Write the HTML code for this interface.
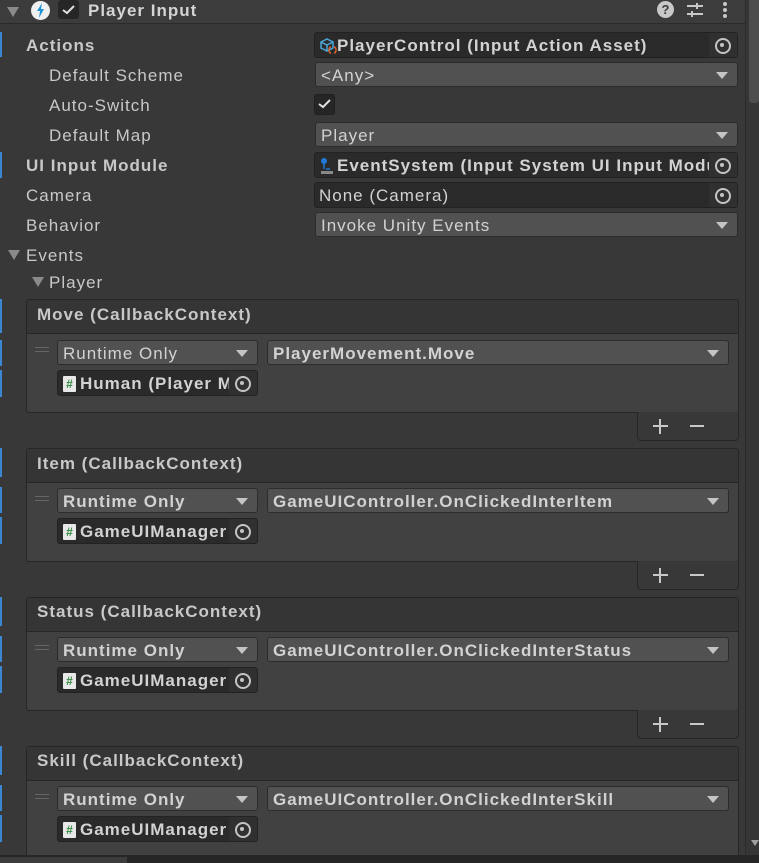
<!DOCTYPE html>
<html><head><meta charset="utf-8"><style>
*{box-sizing:border-box;margin:0;padding:0}
body{width:759px;height:863px;background:#383838;position:relative;overflow:hidden;font-family:"Liberation Sans",sans-serif;font-size:17px;letter-spacing:1px;color:#c8c8c8}
.a{position:absolute}
.t{position:absolute;white-space:nowrap;line-height:20px;top:0}
.b{font-weight:bold}
.dd{position:absolute;background:#515151;border:1px solid #2c2c2c;border-radius:3px;height:25px;overflow:hidden}
.dd span{position:absolute;left:5px;top:3px;line-height:20px;white-space:nowrap;color:#d2d2d2}
.arr{position:absolute;right:9px;top:9px;width:0;height:0;border-left:6px solid transparent;border-right:6px solid transparent;border-top:7px solid #c4c4c4}
.of{position:absolute;background:#2a2a2a;border:1px solid #222;border-radius:3px;height:26px;overflow:hidden}
.of span{position:absolute;top:3px;line-height:20px;white-space:nowrap;color:#d2d2d2}
.tg{position:absolute;right:0;top:0;width:28px;height:100%;background:#303030}
.tg:after{content:"";position:absolute;left:6px;top:5px;width:12px;height:12px;border:2px solid #c4c4c4;border-radius:50%}
.tg:before{content:"";position:absolute;left:11px;top:10px;width:4px;height:4px;background:#c4c4c4;border-radius:50%}
.blue{position:absolute;left:0;width:2px;background:#3a86d0}
.hash{position:absolute;left:5px;top:5px;width:13px;height:16px;background:#e8e8e8;border-radius:1px;color:#2e8b3e;font-size:12px;font-weight:bold;line-height:16px;text-align:center;letter-spacing:0}
.tri{position:absolute;width:0;height:0;border-left:6px solid transparent;border-right:6px solid transparent;border-top:10px solid #8a8a8a}
.pl{position:absolute;width:15px;height:2px;background:#c8c8c8}
.pl:after{content:"";position:absolute;left:6px;top:-6px;width:2px;height:15px;background:#c8c8c8}
</style></head><body>
<div class="a" style="left:0;top:0;width:745px;height:24px;background:#3c3c3c;border-bottom:1px solid #2a2a2a"></div>
<div class="tri" style="left:7px;top:7px"></div>
<div class="a" style="left:31px;top:1px;width:19px;height:19px;border-radius:50%;background:#f0f0f0"></div>
<svg class="a" style="left:34px;top:3px" width="13" height="15" viewBox="0 0 13 15"><path d="M8 0 L3 8 H6 L5 15 L10 6 H7 Z" fill="#1f93d8"/></svg>
<div class="a" style="left:58px;top:0;width:21px;height:19px;background:#262626;border-radius:3px"></div>
<svg class="a" style="left:61px;top:3px" width="15" height="13"><path d="M2 7 L6 10 L13 3" stroke="#e0e0e0" stroke-width="2" fill="none"/></svg>
<div class="t b" style="left:88px;top:1px;color:#d4d4d4">Player Input</div>
<div class="a" style="left:657px;top:1px;width:17px;height:17px;border-radius:50%;background:#c8c8c8;color:#3c3c3c;font-size:13px;font-weight:bold;text-align:center;line-height:17px;letter-spacing:0">?</div>
<svg class="a" style="left:686px;top:2px" width="18" height="16"><path d="M1 4H17M1 12H17" stroke="#c8c8c8" stroke-width="2"/><path d="M11 1V7M6 9V15" stroke="#c8c8c8" stroke-width="2"/></svg>
<div class="a" style="left:723px;top:2px;width:4px;height:4px;background:#c8c8c8;border-radius:50%;box-shadow:0 6px 0 #c8c8c8,0 12px 0 #c8c8c8"></div>
<div class="a" style="left:745px;top:0;width:14px;height:855px;background:#363636;border-left:1px solid #2c2c2c"></div>
<div class="a" style="left:749px;top:0;width:10px;height:103px;background:#4d4d4d;border-radius:0 0 3px 3px"></div>
<div class="a" style="left:751px;top:840px;border-left:4px solid transparent;border-right:4px solid transparent;border-top:6px solid #a0a0a0"></div>

<div class="blue" style="top:32px;height:25px"></div>
<div class="t b" style="left:26px;top:36px">Actions</div>
<div class="of" style="left:314px;top:32px;width:424px"><span style="left:22px;font-weight:bold">PlayerControl (Input Action Asset)</span><div class="tg"></div>
<svg class="a" style="left:4px;top:4px" width="18" height="18"><path d="M2 5 L8 2 L14 5 L14 11 L8 14 L2 11 Z M2 5 L8 8 L14 5 M8 8 V14" stroke="#4aa6d8" stroke-width="1.5" fill="none"/><path d="M12 10 Q10 10 10 13 Q10 16 12 16 M15 10 Q17 10 17 13 Q17 16 15 16" stroke="#e0602a" stroke-width="1.4" fill="none"/></svg></div>
<div class="t" style="left:49px;top:66px">Default Scheme</div>
<div class="dd" style="left:315px;top:62px;width:423px"><span>&lt;Any&gt;</span><div class="arr"></div></div>
<div class="t" style="left:49px;top:96px">Auto-Switch</div>
<div class="a" style="left:314px;top:94px;width:21px;height:21px;background:#262626;border-radius:3px;border:1px solid #202020"></div>
<svg class="a" style="left:317px;top:97px" width="15" height="13"><path d="M2 7 L6 10 L13 3" stroke="#e0e0e0" stroke-width="2" fill="none"/></svg>
<div class="t" style="left:49px;top:126px">Default Map</div>
<div class="dd" style="left:315px;top:122px;width:423px"><span>Player</span><div class="arr"></div></div>
<div class="blue" style="top:152px;height:26px"></div>
<div class="t b" style="left:26px;top:156px">UI Input Module</div>
<div class="of" style="left:314px;top:152px;width:424px"><span style="left:22px;font-weight:bold">EventSystem (Input System UI Input Module)</span><div class="tg"></div>
<svg class="a" style="left:5px;top:4px" width="14" height="18"><circle cx="4" cy="4" r="3" fill="#1f7ad8"/><path d="M4 6V12" stroke="#1f7ad8" stroke-width="1.5"/><path d="M6 12H10" stroke="#1f7ad8" stroke-width="1.5"/><rect x="1" y="14" width="12" height="3" fill="#888"/></svg></div>
<div class="t" style="left:26px;top:186px">Camera</div>
<div class="of" style="left:314px;top:182px;width:424px"><span style="left:4px">None (Camera)</span><div class="tg"></div></div>
<div class="t" style="left:26px;top:216px">Behavior</div>
<div class="dd" style="left:315px;top:212px;width:423px"><span>Invoke Unity Events</span><div class="arr"></div></div>
<div class="tri" style="left:8px;top:250px"></div>
<div class="t" style="left:26px;top:246px">Events</div>
<div class="tri" style="left:32px;top:277px"></div>
<div class="t" style="left:49px;top:273px">Player</div>

<!-- Move -->
<div class="a" style="left:26px;top:299px;width:713px;height:114px;border:1px solid #262626;border-radius:3px;background:#414141;overflow:hidden"><div class="a" style="left:0;top:0;width:100%;height:34px;background:#353535;border-bottom:1px solid #262626"></div></div>
<div class="t b" style="left:37px;top:305px">Move (CallbackContext)</div>
<div class="blue" style="top:299px;height:34px"></div><div class="blue" style="top:340px;height:26px"></div><div class="blue" style="top:370px;height:27px"></div>
<div class="a" style="left:35px;top:347px;width:14px;height:1px;background:#666;box-shadow:0 4px 0 #666"></div>
<div class="dd" style="left:57px;top:340px;width:201px"><span>Runtime Only</span><div class="arr"></div></div>
<div class="dd" style="left:267px;top:340px;width:462px"><span class="b">PlayerMovement.Move</span><div class="arr"></div></div>
<div class="of" style="left:57px;top:370px;width:201px"><div class="hash">#</div><span style="left:22px;font-weight:bold">Human (Player Movement)</span><div class="tg"></div></div>
<div class="a" style="left:637px;top:412px;width:102px;height:29px;border:1px solid #262626;border-top:none;border-radius:0 0 4px 4px;background:#383838"></div>
<div class="pl" style="left:653px;top:425px"></div><div class="a" style="left:690px;top:425px;width:14px;height:2px;background:#c8c8c8"></div>

<!-- Item -->
<div class="a" style="left:26px;top:448px;width:713px;height:114px;border:1px solid #262626;border-radius:3px;background:#414141;overflow:hidden"><div class="a" style="left:0;top:0;width:100%;height:34px;background:#353535;border-bottom:1px solid #262626"></div></div>
<div class="t b" style="left:37px;top:454px">Item (CallbackContext)</div>
<div class="blue" style="top:448px;height:29px"></div><div class="blue" style="top:487px;height:26px"></div><div class="blue" style="top:517px;height:27px"></div>
<div class="a" style="left:35px;top:496px;width:14px;height:1px;background:#666;box-shadow:0 4px 0 #666"></div>
<div class="dd" style="left:57px;top:488px;width:201px"><span class="b">Runtime Only</span><div class="arr"></div></div>
<div class="dd" style="left:267px;top:488px;width:462px"><span class="b">GameUIController.OnClickedInterItem</span><div class="arr"></div></div>
<div class="of" style="left:57px;top:518px;width:201px"><div class="hash">#</div><span style="left:22px;font-weight:bold">GameUIManager</span><div class="tg"></div></div>
<div class="a" style="left:637px;top:561px;width:102px;height:29px;border:1px solid #262626;border-top:none;border-radius:0 0 4px 4px;background:#383838"></div>
<div class="pl" style="left:653px;top:574px"></div><div class="a" style="left:690px;top:574px;width:14px;height:2px;background:#c8c8c8"></div>

<!-- Status -->
<div class="a" style="left:26px;top:597px;width:713px;height:114px;border:1px solid #262626;border-radius:3px;background:#414141;overflow:hidden"><div class="a" style="left:0;top:0;width:100%;height:34px;background:#353535;border-bottom:1px solid #262626"></div></div>
<div class="t b" style="left:37px;top:602px">Status (CallbackContext)</div>
<div class="blue" style="top:597px;height:29px"></div><div class="blue" style="top:636px;height:26px"></div><div class="blue" style="top:666px;height:27px"></div>
<div class="a" style="left:35px;top:645px;width:14px;height:1px;background:#666;box-shadow:0 4px 0 #666"></div>
<div class="dd" style="left:57px;top:637px;width:201px"><span class="b">Runtime Only</span><div class="arr"></div></div>
<div class="dd" style="left:267px;top:637px;width:462px"><span class="b">GameUIController.OnClickedInterStatus</span><div class="arr"></div></div>
<div class="of" style="left:57px;top:667px;width:201px"><div class="hash">#</div><span style="left:22px;font-weight:bold">GameUIManager</span><div class="tg"></div></div>
<div class="a" style="left:637px;top:710px;width:102px;height:29px;border:1px solid #262626;border-top:none;border-radius:0 0 4px 4px;background:#383838"></div>
<div class="pl" style="left:653px;top:723px"></div><div class="a" style="left:690px;top:723px;width:14px;height:2px;background:#c8c8c8"></div>

<!-- Skill -->
<div class="a" style="left:26px;top:746px;width:713px;height:114px;border:1px solid #262626;border-radius:3px;background:#414141;overflow:hidden"><div class="a" style="left:0;top:0;width:100%;height:34px;background:#353535;border-bottom:1px solid #262626"></div></div>
<div class="t b" style="left:37px;top:751px">Skill (CallbackContext)</div>
<div class="blue" style="top:746px;height:29px"></div><div class="blue" style="top:785px;height:26px"></div><div class="blue" style="top:815px;height:27px"></div>
<div class="a" style="left:35px;top:794px;width:14px;height:1px;background:#666;box-shadow:0 4px 0 #666"></div>
<div class="dd" style="left:57px;top:786px;width:201px"><span class="b">Runtime Only</span><div class="arr"></div></div>
<div class="dd" style="left:267px;top:786px;width:462px"><span class="b">GameUIController.OnClickedInterSkill</span><div class="arr"></div></div>
<div class="of" style="left:57px;top:816px;width:201px"><div class="hash">#</div><span style="left:22px;font-weight:bold">GameUIManager</span><div class="tg"></div></div>
<div class="a" style="left:0;top:855px;width:759px;height:8px;background:#262626"></div>
<div class="a" style="left:0;top:857px;width:127px;height:6px;background:#3c3c3c"></div>
</body></html>
